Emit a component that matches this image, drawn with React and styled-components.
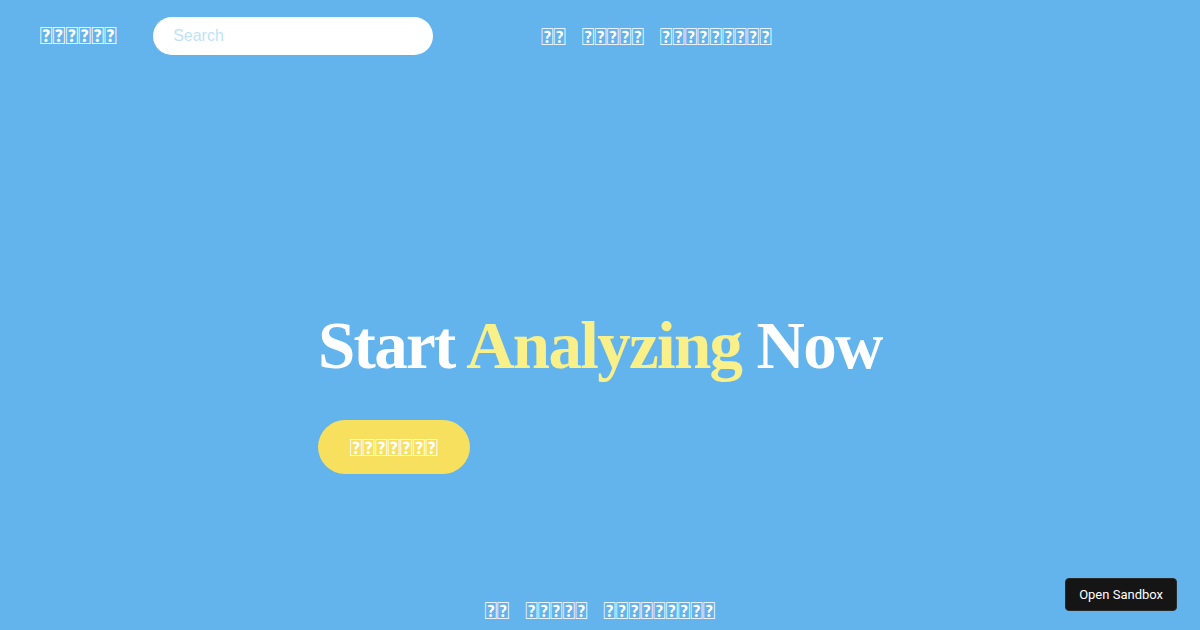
import React from 'react';
import styled, { createGlobalStyle } from 'styled-components';

const GlobalStyle = createGlobalStyle`
  html, body {
    margin: 0;
    padding: 0;
    height: 100%;
  }
  body {
    background: #63b3ed;
    font-family: Lato, sans-serif;
  }
  #root {
    min-height: 100vh;
  }
`;

const Page = styled.div`
  min-height: 100vh;
  display: flex;
  flex-direction: column;
  background: #63b3ed;
  color: #fff;
`;

const Header = styled.header`
  display: flex;
  align-items: center;
  height: 72px;
  padding: 0 40px;
`;

const Logo = styled.div`
  font-family: Lato, sans-serif;
  font-size: 23.5px;
  font-weight: 700;
  line-height: 1;
  color: #fff;
`;

const Search = styled.input`
  margin-left: 36px;
  width: 280px;
  height: 38px;
  box-sizing: border-box;
  border: none;
  border-radius: 19px;
  background: #fff;
  padding: 0 20px;
  font-family: "Liberation Sans", Arial, sans-serif;
  font-size: 16px;
  outline: none;
  &::placeholder {
    color: #bee3f8;
  }
`;

const Nav = styled.nav`
  display: flex;
  align-items: center;
  gap: 16px;
  margin-left: ${(p) => p.$offset || 0}px;
`;

const NavLink = styled.a`
  font-family: Lato, sans-serif;
  font-size: 23px;
  font-weight: 600;
  line-height: 1;
  color: #fff;
  text-decoration: none;
`;

const Main = styled.main`
  flex: 1;
  display: flex;
  flex-direction: column;
  justify-content: center;
  padding: 124px 318px 0;
`;

const Title = styled.h1`
  margin: 0;
  font-family: "Liberation Serif", "Times New Roman", serif;
  font-size: 67px;
  font-weight: 700;
  letter-spacing: -0.025em;
  line-height: 1;
  white-space: nowrap;
`;

const Accent = styled.span`
  color: #faf089;
`;

const Cta = styled.button`
  align-self: flex-start;
  margin-top: 41px;
  height: 54px;
  padding: 0 32px;
  border: none;
  border-radius: 27px;
  background: #f6e05e;
  color: #fff;
  font-family: Lato, sans-serif;
  font-size: 23px;
  font-weight: 700;
  cursor: pointer;
`;

const Footer = styled.footer`
  height: 40px;
  display: flex;
  align-items: center;
  justify-content: center;
`;

const SandboxButton = styled.button`
  position: fixed;
  right: 23px;
  bottom: 19px;
  height: 33px;
  padding: 0 13px;
  border: 1px solid #2a2a2a;
  border-radius: 4px;
  background: #151515;
  color: #fff;
  font-family: Roboto, "Liberation Sans", sans-serif;
  font-size: 13px;
`;

// characters no installed font carries: they show as Lato's missing-glyph box
const missing = (n) => String.fromCharCode(...Array.from({ length: n }, (_, i) => 0xe000 + i));

const links = [missing(2), missing(5), missing(9)];

export default function App() {
  return (
    <>
      <GlobalStyle />
      <Page>
        <Header>
          <Logo>{missing(6)}</Logo>
          <Search placeholder="Search" type="text" />
          <Nav $offset={108}>
            {links.map((l) => (
              <NavLink key={l} href="#">{l}</NavLink>
            ))}
          </Nav>
        </Header>
        <Main>
          <Title>
            Start <Accent>Analyzing</Accent> Now
          </Title>
          <Cta>{missing(7)}</Cta>
        </Main>
        <Footer>
          <Nav>
            {links.map((l) => (
              <NavLink key={l} href="#">{l}</NavLink>
            ))}
          </Nav>
        </Footer>
      </Page>
      <SandboxButton>Open Sandbox</SandboxButton>
    </>
  );
}
